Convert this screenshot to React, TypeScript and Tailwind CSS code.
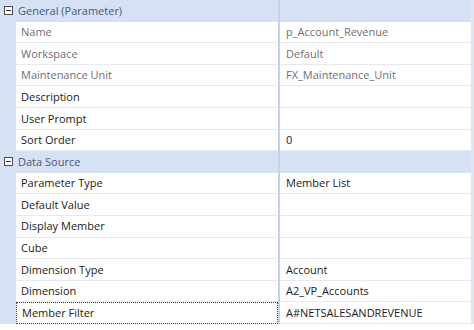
import React from 'react'

type Row = { label: string; value?: string; readOnly?: boolean; focus?: boolean }
type Group = { title: string; rows: Row[] }

const groups: Group[] = [
  {
    title: 'General (Parameter)',
    rows: [
      { label: 'Name', value: 'p_Account_Revenue', readOnly: true },
      { label: 'Workspace', value: 'Default', readOnly: true },
      { label: 'Maintenance Unit', value: 'FX_Maintenance_Unit', readOnly: true },
      { label: 'Description' },
      { label: 'User Prompt' },
      { label: 'Sort Order', value: '0' },
    ],
  },
  {
    title: 'Data Source',
    rows: [
      { label: 'Parameter Type', value: 'Member List' },
      { label: 'Default Value' },
      { label: 'Display Member' },
      { label: 'Cube' },
      { label: 'Dimension Type', value: 'Account' },
      { label: 'Dimension', value: 'A2_VP_Accounts' },
      { label: 'Member Filter', value: 'A#NETSALESANDREVENUE', focus: true },
    ],
  },
]

function MinusBox() {
  return (
    <span className="w-[9px] h-[9px] border border-[#4d4d4d] bg-white flex items-center justify-center">
      <span className="w-[5px] h-px bg-[#333]" />
    </span>
  )
}

export default function App() {
  return (
    <div className="w-[474px] h-[330px] bg-white text-[11px] overflow-hidden" style={{ fontFamily: '"Open Sans", "Noto Sans", sans-serif' }}>
      <div className="flex flex-col border-r-[3px] border-[#dfe6f2]">
        {groups.map((g) => (
          <div key={g.title}>
            <div className="h-[21.6px] flex bg-[#d6e1f4]">
              <div className="flex items-center gap-[5px] pl-[4px] w-[278px] text-[#4a5778]">
                <MinusBox />
                <span>{g.title}</span>
              </div>
              <div className="w-[2px] bg-[#c3d1ea]" />
            </div>
            {g.rows.map((r) => (
              <div key={r.label} className="h-[21.6px] flex">
                <div className="w-[16px] bg-[#d6e1f4]" />
                <div className={`w-[262px] flex items-center pl-[5px] pt-px border-b ${r.focus ? 'border border-dotted border-[#444]' : 'border-[#e6e9ee]'} ${r.readOnly ? 'text-[#707070]' : 'text-[#1a1a1a]'}`}>
                  {r.label}
                </div>
                <div className="w-[2px] bg-[#c3d1ea]" />
                <div className={`flex-1 flex items-center pl-[6px] pt-px border-b border-[#e6e9ee] ${r.readOnly ? 'text-[#707070]' : 'text-[#1a1a1a]'}`}>
                  {r.value}
                </div>
              </div>
            ))}
          </div>
        ))}
      </div>
    </div>
  )
}
